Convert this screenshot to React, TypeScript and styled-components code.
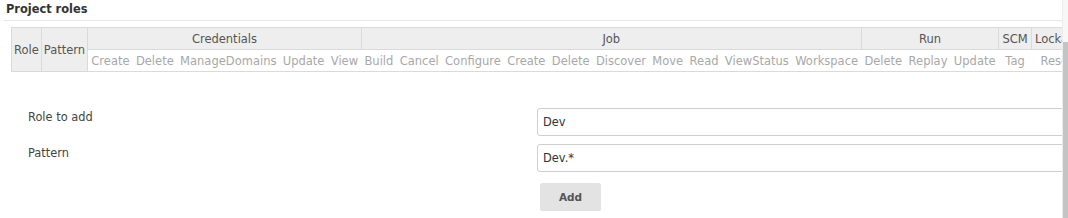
import React from "react";
import styled, { createGlobalStyle } from "styled-components";

const GlobalStyle = createGlobalStyle`
  html, body {
    margin: 0;
    padding: 0;
    background: #ffffff;
    font-family: "DejaVu Sans", Verdana, sans-serif;
    overflow: hidden;
  }
`;

const Page = styled.div`
  display: flex;
  height: 218px;
  width: 1068px;
`;

const Main = styled.div`
  flex: 1;
  min-width: 0;
  overflow: hidden;
`;

const ScrollTrack = styled.div`
  width: 5px;
  display: flex;
  flex-direction: column;
  background: #f7f7f7;
  border-left: 1px solid #ececec;
`;

const ScrollThumb = styled.div`
  flex: 1;
  margin-top: 42px;
  background: #c4c4c4;
`;

const Section = styled.section`
  padding: 2px 0 0 4px;
`;

const Title = styled.h2`
  margin: 0;
  font-size: 11.4px;
  line-height: 14px;
  font-weight: bold;
  color: #333333;
  padding: 0 0 4px 2px;
  border-bottom: 1px solid #e8e8e8;
`;

const Table = styled.table`
  margin: 6px 0 0 11px;
  border-collapse: collapse;
  font-size: 11.5px;
  line-height: 14px;
`;

const Row = styled.tr`
  height: 22px;
`;

const HeadCell = styled.th<{ $compact?: boolean }>`
  background: #eeeeee;
  border: 1px solid #dadada;
  padding: 0 ${(p) => (p.$compact ? "2px" : "3.2px")};
  text-align: center;
  vertical-align: middle;
  font-weight: normal;
  color: #555555;
  white-space: nowrap;
`;

const SubCell = styled.td`
  background: #ffffff;
  border-top: 1px solid #dadada;
  border-bottom: 1px solid #dadada;
  border-left: none;
  border-right: none;
  padding: 0 3.2px;
  text-align: center;
  vertical-align: middle;
  color: #a8a8a8;
  white-space: nowrap;
`;

const Form = styled.div`
  display: grid;
  grid-template-columns: 509px 600px;
  row-gap: 8px;
  margin-top: 36px;
  padding-left: 28px;
`;

const Label = styled.div`
  font-size: 11.4px;
  line-height: 14px;
  color: #444444;
  padding-top: 2px;
`;

const Input = styled.input`
  box-sizing: border-box;
  width: 600px;
  height: 28px;
  border: 1px solid #cfcfcf;
  border-radius: 3px;
  padding: 0 5px;
  margin: 0;
  font-family: "DejaVu Sans", Verdana, sans-serif;
  font-size: 11.4px;
  color: #333333;
  background: #ffffff;
  outline: none;
`;

const Button = styled.button`
  justify-self: start;
  width: 61px;
  height: 28px;
  margin: 3px 0 0 3px;
  border: none;
  border-radius: 2px;
  background: #e3e3e3;
  font-family: "DejaVu Sans", Verdana, sans-serif;
  font-size: 10.5px;
  font-weight: bold;
  color: #555555;
  padding: 0;
`;

const groups: { name: string; perms: string[] }[] = [
  { name: "Credentials", perms: ["Create", "Delete", "ManageDomains", "Update", "View"] },
  {
    name: "Job",
    perms: [
      "Build",
      "Cancel",
      "Configure",
      "Create",
      "Delete",
      "Discover",
      "Move",
      "Read",
      "ViewStatus",
      "Workspace",
    ],
  },
  { name: "Run", perms: ["Delete", "Replay", "Update"] },
  { name: "SCM", perms: ["Tag"] },
  { name: "Lockable Resources", perms: ["Reserve", "Unlock"] },
];

export default function App() {
  return (
    <>
      <GlobalStyle />
      <Page>
        <Main>
          <Section>
            <Title>Project roles</Title>
          </Section>
          <Table>
            <thead>
              <Row>
                <HeadCell rowSpan={2} $compact>
                  Role
                </HeadCell>
                <HeadCell rowSpan={2} $compact>
                  Pattern
                </HeadCell>
                {groups.map((g) => (
                  <HeadCell key={g.name} colSpan={g.perms.length}>
                    {g.name}
                  </HeadCell>
                ))}
              </Row>
              <Row>
                {groups.flatMap((g) =>
                  g.perms.map((p) => <SubCell key={g.name + p}>{p}</SubCell>)
                )}
              </Row>
            </thead>
          </Table>
          <Form>
            <Label>Role to add</Label>
            <Input defaultValue="Dev" />
            <Label>Pattern</Label>
            <Input defaultValue="Dev.*" />
            <div />
            <Button>Add</Button>
          </Form>
        </Main>
        <ScrollTrack>
          <ScrollThumb />
        </ScrollTrack>
      </Page>
    </>
  );
}
